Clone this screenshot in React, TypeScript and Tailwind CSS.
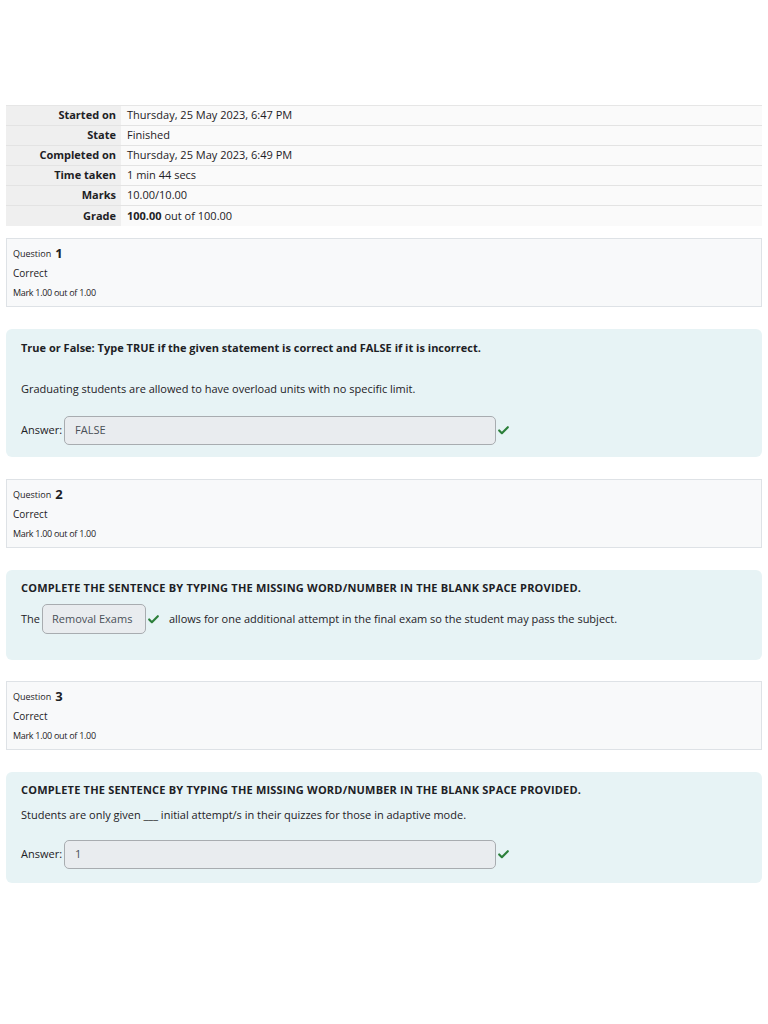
import { Check } from "lucide-react";

const summary: { label: string; value: React.ReactNode }[] = [
  { label: "Started on", value: "Thursday, 25 May 2023, 6:47 PM" },
  { label: "State", value: "Finished" },
  { label: "Completed on", value: "Thursday, 25 May 2023, 6:49 PM" },
  { label: "Time taken", value: "1 min 44 secs" },
  { label: "Marks", value: "10.00/10.00" },
  {
    label: "Grade",
    value: (
      <span>
        <b className="font-bold">100.00</b> out of 100.00
      </span>
    ),
  },
];

function Tick() {
  return <Check className="h-[13px] w-[13px] shrink-0 text-[#2c7f3a]" strokeWidth={4} />;
}

function QuestionInfo({ n }: { n: number }) {
  return (
    <div className="flex h-[69px] flex-col border border-[#dee2e6] bg-[#f8f9fa] px-[6px] pt-[5px] text-[#1d2125]">
      <div className="flex h-[20px] items-center text-[9px]">
        Question <span className="ml-[4px] text-[13px] font-bold">{n}</span>
      </div>
      <div className="flex h-[18px] items-center text-[10px]">Correct</div>
      <div className="flex h-[22px] items-center text-[9px] tracking-[-0.3px]">Mark 1.00 out of 1.00</div>
    </div>
  );
}

function AnswerBox({ value }: { value: string }) {
  return (
    <div className="flex items-center">
      <span className="mr-[2px] text-[11px]">Answer:</span>
      <div className="flex h-[29px] w-[432px] items-center rounded-[5px] border border-[#a8acb0] bg-[#e9ecef] px-[10px] text-[11px] text-[#495057]">
        {value}
      </div>
      <span className="ml-[1px]">
        <Tick />
      </span>
    </div>
  );
}

export default function App() {
  return (
    <div
      className="min-h-[1024px] bg-white px-[6px] pt-[105px] text-[#1d2125]"
      style={{ fontFamily: '"Open Sans", "Liberation Sans", sans-serif' }}
    >
      <div className="border-t border-[#e6e6e6]">
        {summary.map((row) => (
          <div key={row.label} className="flex h-[20px] border-b border-[#e3e3e3] text-[11px] last:border-b-0">
            <div className="flex w-[115px] items-center justify-end bg-[#efefef] pr-[5px] font-bold">
              {row.label}
            </div>
            <div className="flex flex-1 items-center bg-[#fafafa] pl-[6px]">{row.value}</div>
          </div>
        ))}
      </div>

      <div className="mt-[12px]">
        <QuestionInfo n={1} />
      </div>
      <div className="mt-[22px] h-[128px] rounded-[6px] bg-[#e7f3f5] px-[15px] pt-[10px] text-[11px]">
        <div className="flex h-[18px] items-center font-bold">
          True or False: Type TRUE if the given statement is correct and FALSE if it is incorrect.
        </div>
        <div className="mt-[23px] flex h-[18px] items-center">
          Graduating students are allowed to have overload units with no specific limit.
        </div>
        <div className="mt-[18px]">
          <AnswerBox value="FALSE" />
        </div>
      </div>

      <div className="mt-[22px]">
        <QuestionInfo n={2} />
      </div>
      <div className="mt-[22px] h-[90px] rounded-[6px] bg-[#e7f3f5] px-[15px] pt-[9px] text-[11px]">
        <div className="flex h-[18px] items-center font-bold tracking-[0.2px]">
          COMPLETE THE SENTENCE BY TYPING THE MISSING WORD/NUMBER IN THE BLANK SPACE PROVIDED.
        </div>
        <div className="mt-[7px] flex items-center">
          <span>The</span>
          <div className="ml-[2px] flex h-[30px] w-[104px] items-center rounded-[5px] border border-[#a8acb0] bg-[#e9ecef] px-[9px] text-[#495057]">
            Removal Exams
          </div>
          <span className="ml-[1px]">
            <Tick />
          </span>
          <span className="ml-[9px]">
            allows for one additional attempt in the final exam so the student may pass the subject.
          </span>
        </div>
      </div>

      <div className="mt-[21px]">
        <QuestionInfo n={3} />
      </div>
      <div className="mt-[22px] h-[111px] rounded-[6px] bg-[#e7f3f5] px-[15px] pt-[9px] text-[11px]">
        <div className="flex h-[18px] items-center font-bold tracking-[0.2px]">
          COMPLETE THE SENTENCE BY TYPING THE MISSING WORD/NUMBER IN THE BLANK SPACE PROVIDED.
        </div>
        <div className="mt-[7px] flex h-[18px] items-center">
          Students are only given ___ initial attempt/s in their quizzes for those in adaptive mode.
        </div>
        <div className="mt-[16px]">
          <AnswerBox value="1" />
        </div>
      </div>
    </div>
  );
}
